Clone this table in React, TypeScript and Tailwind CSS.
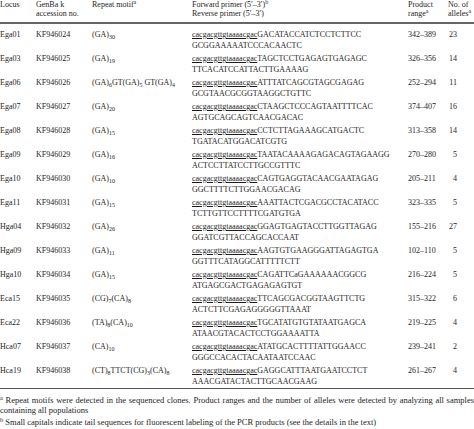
const TAIL = 'cacgacgttgtaaaacgac';

type Row = {
  locus: string;
  acc: string;
  motif: React.ReactNode;
  fwd: string;
  rev: string;
  range: string;
  alleles: string;
};

const rows: Row[] = [
  { locus: 'Ega01', acc: 'KF946024', motif: <>(GA)<sub>30</sub></>, fwd: 'GACATACCATCTCCTCTTCC', rev: 'GCGGAAAAATCCCACAACTC', range: '342–389', alleles: '23' },
  { locus: 'Ega03', acc: 'KF946025', motif: <>(GA)<sub>19</sub></>, fwd: 'TAGCTCCTGAGAGTGAGAGC', rev: 'TTCACATCCATTACTTGAAAAG', range: '326–356', alleles: '14' },
  { locus: 'Ega06', acc: 'KF946026', motif: <>(GA)<sub>6</sub>GT(GA)<sub>5</sub> GT(GA)<sub>4</sub></>, fwd: 'ATTTATCAGCGTAGCGAGAG', rev: 'GCGTAACGCGGTAAGGCTGTTC', range: '252–294', alleles: '11' },
  { locus: 'Ega07', acc: 'KF946027', motif: <>(GA)<sub>20</sub></>, fwd: 'CTAAGCTCCCAGTAATTTTCAC', rev: 'AGTGCAGCAGTCAACGACAC', range: '374–407', alleles: '16' },
  { locus: 'Ega08', acc: 'KF946028', motif: <>(GA)<sub>15</sub></>, fwd: 'CCTCTTAGAAAGCATGACTC', rev: 'TGATACATGGACATCGTG', range: '313–358', alleles: '14' },
  { locus: 'Ega09', acc: 'KF946029', motif: <>(GA)<sub>16</sub></>, fwd: 'TAATACAAAAGAGACAGTAGAAGG', rev: 'ACTCCTTATCCTTGCCGTTTC', range: '270–280', alleles: '5' },
  { locus: 'Ega10', acc: 'KF946030', motif: <>(GA)<sub>10</sub></>, fwd: 'CAGTGAGGTACAACGAATAGAG', rev: 'GGCTTTTCTTGGAACGACAG', range: '205–211', alleles: '4' },
  { locus: 'Ega11', acc: 'KF946031', motif: <>(GA)<sub>15</sub></>, fwd: 'AAATTACTCGACGCCTACATACC', rev: 'TCTTGTTCCTTTTCGATGTGA', range: '323–335', alleles: '5' },
  { locus: 'Hga04', acc: 'KF946032', motif: <>(GA)<sub>26</sub></>, fwd: 'GGAGTGAGTACCTTGGTTAGAG', rev: 'GGATCGTTACCAGCACCAAT', range: '155–216', alleles: '27' },
  { locus: 'Hga09', acc: 'KF946033', motif: <>(GA)<sub>11</sub></>, fwd: 'AAGTGTGAAGGGATTAGAGTGA', rev: 'GGTTTCATAGGCATTTTTCTT', range: '102–110', alleles: '5' },
  { locus: 'Hga10', acc: 'KF946034', motif: <>(GA)<sub>15</sub></>, fwd: 'CAGATTCaGAAAAAACGGCG', rev: 'ATGAGCGACTGAGAGAGTGT', range: '216–224', alleles: '5' },
  { locus: 'Eca15', acc: 'KF946035', motif: <>(CG)<sub>7</sub>(CA)<sub>8</sub></>, fwd: 'TTCAGCGACGGTAAGTTCTG', rev: 'ACTCTTCGAGAGGGGGTTAAAT', range: '315–322', alleles: '6' },
  { locus: 'Eca22', acc: 'KF946036', motif: <>(TA)<sub>8</sub>(CA)<sub>10</sub></>, fwd: 'TGCATATGTGTATAATGAGCA', rev: 'ATAACGTACACTCCTGGAAAATTA', range: '219–225', alleles: '4' },
  { locus: 'Hca07', acc: 'KF946037', motif: <>(CA)<sub>10</sub></>, fwd: 'ATATGCACTTTTATTGGAACC', rev: 'GGGCCACACTACAATAATCCAAC', range: '239–241', alleles: '2' },
  { locus: 'Hca19', acc: 'KF946038', motif: <>(CT)<sub>8</sub>TTCT(CG)<sub>3</sub>(CA)<sub>8</sub></>, fwd: 'GAGGCATTTAATGAATCCTCT', rev: 'AAACGATACTACTTGCAACGAAG', range: '261–267', alleles: '4' },
];

export default function App() {
  return (
    <div
      className="w-[474px] h-[429px] overflow-hidden bg-white text-[#1e1e1e] text-[8px] leading-[11px]"
      style={{ fontFamily: '"Liberation Serif", "Times New Roman", serif' }}
    >
      <table className="w-full border-collapse table-fixed">
        <colgroup>
          <col className="w-[36px]" />
          <col className="w-[56px]" />
          <col className="w-[100px]" />
          <col className="w-[216px]" />
          <col className="w-[40px]" />
          <col />
        </colgroup>
        <thead>
          <tr className="border-b-2 border-[#666] align-top text-left leading-[9px]">
            <th className="font-normal pb-[4px] pt-0">Locus</th>
            <th className="font-normal pb-[4px] pt-0">
              GenBa k
              <br />
              accession no.
            </th>
            <th className="font-normal pb-[4px] pt-0">
              Repeat motif<sup>a</sup>
            </th>
            <th className="font-normal pb-[4px] pt-0">
              Forward primer (5′–3′)<sup>b</sup>
              <br />
              Reverse primer (5′–3′)
            </th>
            <th className="font-normal pb-[4px] pt-0">
              Product
              <br />
              range<sup>a</sup>
            </th>
            <th className="font-normal pb-[4px] pt-0 whitespace-nowrap">
              No. of
              <br />
              alleles<sup>a</sup>
            </th>
          </tr>
        </thead>
        <tbody className="border-b border-[#555]">
          {rows.map((r, i) => {
            const pad = i === 0 ? 'pt-[5px] pb-[1px]' : 'pt-[1px] pb-[1px]';
            return (
              <tr key={r.locus} className="align-top">
                <td className={pad}>{r.locus}</td>
                <td className={pad}>{r.acc}</td>
                <td className={`${pad} whitespace-nowrap`}>{r.motif}</td>
                <td className={`${pad} whitespace-nowrap`}>
                  <div>
                    <span className="underline underline-offset-1">{TAIL}</span>
                    {r.fwd}
                  </div>
                  <div>{r.rev}</div>
                </td>
                <td className={`${pad} whitespace-nowrap`}>{r.range}</td>
                <td className={pad}>
                  <div className="w-[9px] text-right">{r.alleles}</div>
                </td>
              </tr>
            );
          })}
        </tbody>
      </table>
      <div className="pt-[7px] text-[8.5px] leading-[9.5px]">
        <p className="text-justify">
          <sup>a</sup> Repeat motifs were detected in the sequenced clones. Product ranges and the
          number of alleles were detected by analyzing all samples containing all populations
        </p>
        <p className="mt-[3px]">
          <sup>b</sup> Small capitals indicate tail sequences for fluorescent labeling of the PCR
          products (see the details in the text)
        </p>
      </div>
    </div>
  );
}
